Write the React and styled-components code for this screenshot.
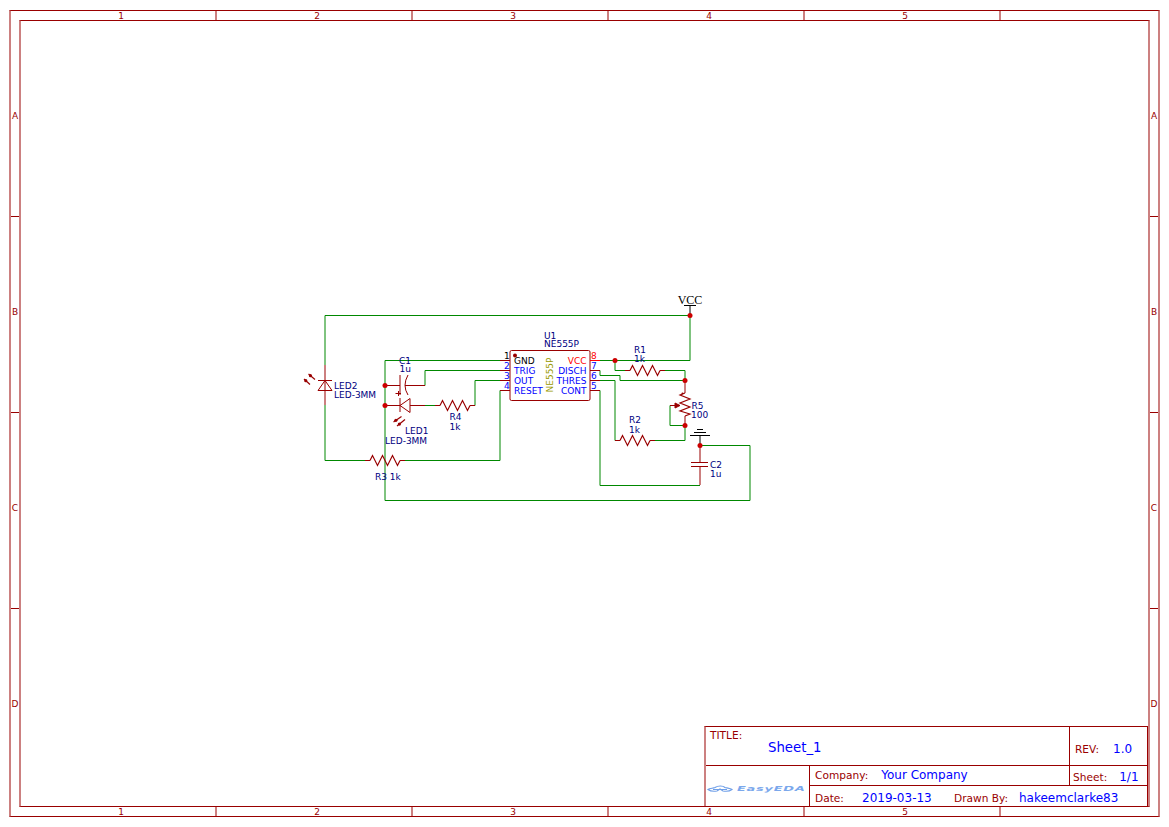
import React from "react";
import styled, { createGlobalStyle } from "styled-components";

const DARK = "#990000";
const SOFT = "#cc8080";
const BLUE = "#0000ff";
const NAVY = "#000080";
const GREEN = "#008800";

const columns = ["1", "2", "3", "4", "5", ""];
const rows = ["A", "B", "C", "D"];

const wires = [
    "M325 365V315.5H690M690 315.5V360.5H600",
    "M325 405V460.5H365",
    "M405 460.5H500V390.5",
    "M385 360.5H500M385 360.5V500.5H750V445.5H700",
    "M425 385.5V370.5H500",
    "M425 405.5H435",
    "M475 405.5V380.5H500",
    "M615 360.5V370.5H625",
    "M660 370.5H685V380.5",
    "M600 370.5V375.5H620V380.5H685",
    "M600 380.5H615V440.5H620",
    "M650 440.5H685V425.5",
    "M600 390.5V485.5H700",
    "M670 405.5V425.5H685",
];

const leads = [
    "M325 365V405",
    "M318 380.5H332M325 380.5L318 390.5H332Z",
    "M385 385.5H400M400 375V395M408 375Q402 385.5 408 395M405 385.5H425",
    "M395.5 393.5H401M398.5 391V396",
    "M385 405.5H400M400 398V412M400 405.5L410 398.5V412.5ZM410 405.5H425",
    "M365 460.5H370M400 460.5H405",
    "M435 405.5H440M470 405.5H475",
    "M625 370.5H630M660 370.5H665",
    "M615 440.5H620M650 440.5H655",
    "M685 380.5V393M685 416V425.5",
    "M670 405.5H680",
    "M700 445V462M691 462.5H708M691 466.5H708M700 467V485",
    "M500 360.5H510M500 370.5H510M500 380.5H510M500 390.5H510",
    "M590 370.5H600M590 380.5H600M590 390.5H600",
];

const resistors = [
    [370, 460.5],
    [440, 405.5],
    [630, 370.5],
    [620, 440.5],
];

const dots = [
    [690, 315.5],
    [385, 385.5],
    [385, 405.5],
    [615, 360.5],
    [685, 380.5],
    [685, 425.5],
    [700, 445.5],
];

const arrows = [
    [310, 384.5, 304, 379],
    [315, 379.5, 308.5, 374],
    [401.5, 416.5, 393.5, 422],
    [405, 419.5, 397, 426],
];

const labels = [
    ["LED2", 334, 389],
    ["LED-3MM", 334, 398],
    ["C1", 399, 364],
    ["1u", 399.5, 372],
    ["LED1", 405, 433.5],
    ["LED-3MM", 385, 444],
    ["R4", 449.5, 419.5],
    ["1k", 449.5, 430],
    ["R3 1k", 375, 479.5],
    ["U1", 544, 338.5],
    ["NE555P", 544, 347],
    ["R1", 634, 353],
    ["1k", 634, 362],
    ["R2", 629, 422.5],
    ["1k", 629, 432.5],
    ["R5", 691.5, 408.5],
    ["100", 691, 417.5],
    ["C2", 710, 468],
    ["1u", 710, 477],
];

const pinTexts = [
    ["1", 504, 359, "#000000"],
    ["2", 504, 369, BLUE],
    ["3", 504, 379, BLUE],
    ["4", 504, 389, BLUE],
    ["8", 591, 359, "#ff0000"],
    ["7", 591, 369, BLUE],
    ["6", 591, 379, BLUE],
    ["5", 591, 389, BLUE],
    ["GND", 514, 364, "#000000"],
    ["TRIG", 514, 374, BLUE],
    ["OUT", 514, 384, BLUE],
    ["RESET", 514, 394, BLUE],
];

const pinTextsRight = [
    ["VCC", 586.5, 364, "#ff0000"],
    ["DISCH", 586.5, 374, BLUE],
    ["THRES", 586.5, 384, BLUE],
    ["CONT", 586.5, 394, BLUE],
];

// three peaks, 30px long, starting on the wire
function zigzag(x, y) {
    return `M${x} ${y}L${x + 2.5} ${y - 5}L${x + 7.5} ${y + 5}L${x + 12.5} ${y - 5}L${x + 17.5} ${y + 5}L${x + 22.5} ${y - 5}L${x + 27.5} ${y + 5}L${x + 30} ${y}`;
}

function Schematic() {
    return (
        <Drawing viewBox="0 0 1169 827">
            {wires.map((d, i) => <Wire key={i} d={d} />)}
            {leads.map((d, i) => <Lead key={i} d={d} />)}
            {resistors.map(([x, y], i) => <Lead key={i} d={zigzag(x, y)} $width={1.2} />)}
            <Lead d="M685 393L680 395L690 399L680 403L690 407L680 411L690 414L685 416" $width={1.2} />
            <circle cx="682.5" cy="393.5" r="1" fill={DARK} />
            <Lead d="M675 403L680 405.5L675 408Z" $fill={DARK} />
            {arrows.map(([x1, y1, x2, y2], i) => (
                <g key={i}>
                    <Lead d={`M${x1} ${y1}L${x2} ${y2}`} $width={1.2} />
                    <circle cx={x2 + (x1 - x2) * 0.3} cy={y2 + (y1 - y2) * 0.3} r="1.6" fill={DARK} />
                </g>
            ))}

            <Chip x="510" y="350.5" width="80" height="50" rx="1.5" />
            <circle cx="515" cy="355.5" r="2" fill={DARK} />
            <Lead d="M590 360.5H600" $stroke="#ff0000" />
            <PartName x="553" y="375" textAnchor="middle" transform="rotate(-90 553 375)">NE555P</PartName>

            {pinTexts.map(([text, x, y, color]) => (
                <PinName key={text} x={x} y={y} $color={color}>{text}</PinName>
            ))}
            {pinTextsRight.map(([text, x, y, color]) => (
                <PinName key={text} x={x} y={y} $color={color} textAnchor="end">{text}</PinName>
            ))}
            {labels.map(([text, x, y]) => (
                <PinName key={text + x} x={x} y={y} $color={NAVY}>{text}</PinName>
            ))}

            <Net d="M690 305V315M684 305.5H696" />
            <NetName x="690" y="303.5" textAnchor="middle">VCC</NetName>
            <Net d="M700 435V445M690 435.5H710M694 432.5H706M697 429.5H703" />

            {dots.map(([cx, cy]) => <circle key={cx + "-" + cy} cx={cx} cy={cy} r="2.5" fill="#cc0000" />)}
        </Drawing>
    );
}

function Logo() {
    return (
        <LogoBox>
            <svg width="26" height="8" viewBox="0 0 26 8">
                <path d="M1 4.5C3 3 6 3.5 8 2.5C11 .5 16 .5 18 2.5C20 3 24 3.5 25 4.5C23 6 19 6.5 16 6L13 4L10 6C7 6.5 3 6 1 4.5Z" fill="none" stroke="#6f9fe8" strokeWidth="1.2" />
                <path d="M6 4.5H20" stroke="#6f9fe8" strokeWidth="1" />
            </svg>
            <LogoName>EasyEDA</LogoName>
        </LogoBox>
    );
}

function TitleBlock() {
    return (
        <Block>
            <TitleCell>
                <Caption>TITLE:</Caption>
                <SheetName>Sheet_1</SheetName>
            </TitleCell>
            <RevCell>
                <Caption>REV:</Caption>
                <Value>1.0</Value>
            </RevCell>
            <Logo />
            <CompanyCell>
                <Caption>Company:</Caption>
                <Value>Your Company</Value>
            </CompanyCell>
            <SheetCell>
                <Caption>Sheet:</Caption>
                <Value>1/1</Value>
            </SheetCell>
            <DateCell>
                <Caption>Date:</Caption>
                <Value>2019-03-13</Value>
                <Caption>Drawn By:</Caption>
                <Value>hakeemclarke83</Value>
            </DateCell>
        </Block>
    );
}

function HorizontalRuler() {
    return (
        <Ruler>
            {columns.map((c, i) => <RulerCell key={i} $first={i === 0} $last={i === 5}>{c}</RulerCell>)}
        </Ruler>
    );
}

function VerticalRuler() {
    return (
        <SideRuler>
            {rows.map((r, i) => <SideCell key={r} $first={i === 0} $last={i === 3}>{r}</SideCell>)}
        </SideRuler>
    );
}

function App() {
    return (
        <Page>
            <GlobalStyle />
            <Frame>
                <Corner />
                <HorizontalRuler />
                <Corner />
                <VerticalRuler />
                <Sheet>
                    <TitleBlock />
                </Sheet>
                <VerticalRuler />
                <Corner />
                <HorizontalRuler />
                <Corner />
            </Frame>
            <Schematic />
        </Page>
    );
}

const GlobalStyle = createGlobalStyle`
    html, body {
        margin: 0;
        background: #ffffff;
    }
    * {
        box-sizing: border-box;
    }
`
const Page = styled.div`
    position: relative;
    width: 1169px;
    height: 827px;
    padding: 10px 0 0 9px;
    overflow: hidden;
    font-family: "DejaVu Sans", sans-serif;
`
const Frame = styled.div`
    display: grid;
    grid-template-columns: 8px 1131px 8px;
    grid-template-rows: 9px 787px 9px;
    width: 1151px;
    height: 807px;
    border-top: 1px solid ${DARK};
    border-bottom: 1px solid ${DARK};
    border-left: 2px solid ${SOFT};
    border-right: 2px solid ${SOFT};
`
const Corner = styled.div``
const Ruler = styled.div`
    display: flex;
`
const RulerCell = styled.div`
    flex: ${p => (p.$last ? "1" : "none")};
    width: ${p => (p.$first ? "198px" : "196px")};
    padding: ${p => (p.$first ? "1px 0 0 8px" : "1px 0 0 6px")};
    border-right: ${p => (p.$last ? "none" : `2px solid ${SOFT}`)};
    font-size: 9px;
    line-height: 9px;
    text-align: center;
    color: ${DARK};
`
const SideRuler = styled.div`
    display: flex;
    flex-direction: column;
`
const SideCell = styled.div`
    flex: ${p => (p.$last ? "1" : "none")};
    display: flex;
    align-items: center;
    justify-content: center;
    height: ${p => (p.$first ? "197px" : "196px")};
    padding-bottom: ${p => (p.$last ? "8px" : "5px")};
    border-bottom: ${p => (p.$last ? "none" : `1px solid ${DARK}`)};
    font-size: 9px;
    color: ${DARK};
`
const Sheet = styled.div`
    display: flex;
    justify-content: flex-end;
    align-items: flex-end;
    border-top: 1px solid ${DARK};
    border-bottom: 1px solid ${DARK};
    border-left: 2px solid ${SOFT};
    border-right: 2px solid ${SOFT};
`
const Block = styled.div`
    display: grid;
    grid-template-columns: 104px 260px 77px;
    grid-template-rows: 39px 20px 20px;
    width: 444px;
    height: 80px;
    border-top: 1px solid ${DARK};
    border-left: 2px solid ${SOFT};
    border-right: 1px solid ${DARK};
    color: ${DARK};
`
const TitleCell = styled.div`
    grid-column: 1 / 3;
    position: relative;
    padding: 3px 0 0 4px;
    border-bottom: 1px solid ${DARK};
    border-right: 1px solid ${DARK};
    font-size: 11px;
    line-height: 11px;
`
const RevCell = styled.div`
    display: flex;
    align-items: center;
    gap: 14px;
    padding: 6px 0 0 5px;
    border-bottom: 1px solid ${DARK};
`
const LogoBox = styled.div`
    grid-row: 2 / 4;
    display: flex;
    align-items: center;
    gap: 4px;
    padding: 5px 0 0 1px;
    border-right: 1px solid ${DARK};
`
const CompanyCell = styled.div`
    display: flex;
    align-items: center;
    gap: 13px;
    padding: 0 0 2px 5px;
    border-bottom: 1px solid ${DARK};
    border-right: 1px solid ${DARK};
`
const SheetCell = styled.div`
    display: flex;
    align-items: center;
    gap: 12px;
    padding: 2px 0 0 3px;
    border-bottom: 1px solid ${DARK};
`
const DateCell = styled.div`
    grid-column: 2 / 4;
    display: grid;
    grid-template-columns: 47px 92px 65px auto;
    align-items: center;
    padding: 3px 0 0 5px;
`
const Caption = styled.span`
    font-size: 10.6px;
    white-space: nowrap;
`
const Value = styled.span`
    font-size: 12px;
    color: ${BLUE};
    white-space: nowrap;
`
const SheetName = styled.span`
    position: absolute;
    left: 62px;
    top: 13px;
    font-size: 13.3px;
    line-height: 16px;
    color: ${BLUE};
`
const LogoName = styled.span`
    font-size: 7px;
    font-weight: bold;
    font-style: italic;
    letter-spacing: 0.4px;
    color: #7ba8ec;
    transform: scaleX(1.85);
    transform-origin: left center;
`
const Drawing = styled.svg`
    position: absolute;
    top: 0;
    left: 0;
    width: 1169px;
    height: 827px;
    pointer-events: none;
`
const Wire = styled.path`
    fill: none;
    stroke: ${GREEN};
    stroke-width: 1;
`
const Lead = styled.path`
    fill: ${p => p.$fill || "none"};
    stroke: ${p => p.$stroke || DARK};
    stroke-width: ${p => p.$width || 1};
`
const Net = styled.path`
    fill: none;
    stroke: #000000;
    stroke-width: 1;
`
const Chip = styled.rect`
    fill: #ffffff;
    stroke: ${DARK};
    stroke-width: 1;
`
const PinName = styled.text`
    font-family: "DejaVu Sans", sans-serif;
    font-size: 9px;
    fill: ${p => p.$color};
`
const PartName = styled.text`
    font-family: "DejaVu Sans", sans-serif;
    font-size: 9px;
    fill: #999900;
`
const NetName = styled.text`
    font-family: "Liberation Serif", serif;
    font-size: 12px;
    fill: #000000;
`

export default App;
